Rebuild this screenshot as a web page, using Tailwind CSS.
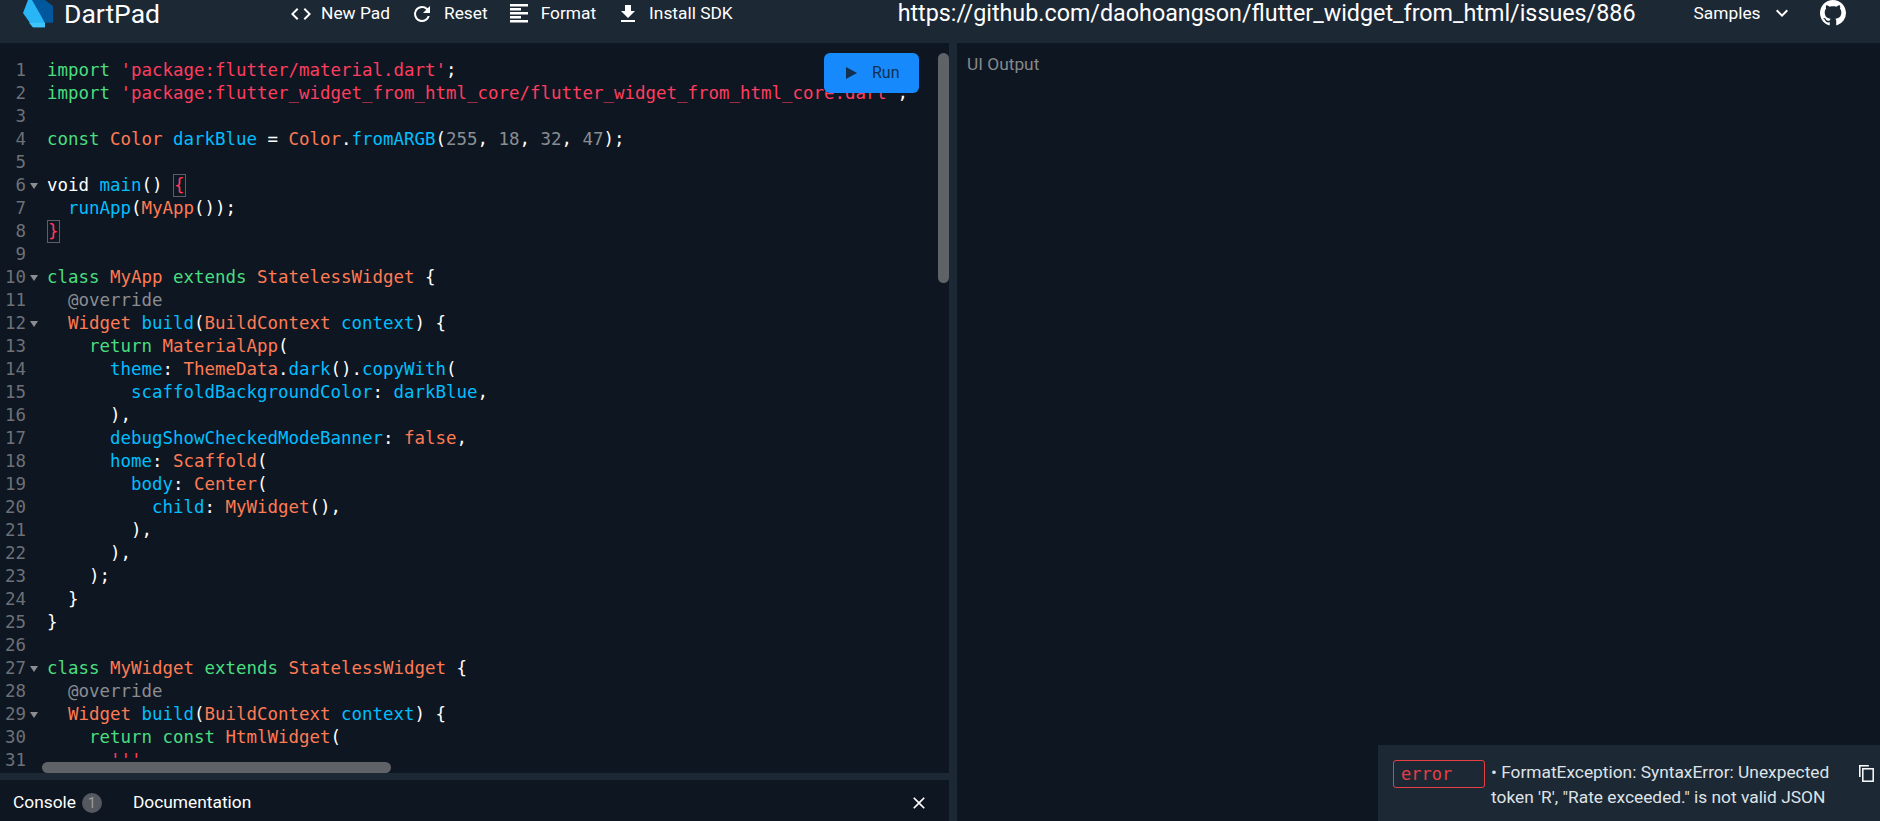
<!DOCTYPE html>
<html lang="en">
<head>
<meta charset="UTF-8">
<title>DartPad</title>
<script src="https://cdn.jsdelivr.net/npm/@tailwindcss/browser@4"></script>
</head>
<body class="h-[821px] w-[1880px] overflow-hidden bg-[#0e1621] font-['Roboto',sans-serif] text-[17.33px] text-white">
  <!-- header -->
  <header class="flex h-[43px] items-start overflow-hidden bg-[#1c2834]">
    <svg class="ml-[23px] h-[28px] w-[31px]" viewBox="0 0 31 28">
      <path d="M0 13 L5 0 L11 0 L22 22.7 L22 27.3 L10 27.3 Z" fill="#29b6f6"/>
      <path d="M6 22.7 L10 27.3 L22 27.3 L22 22.7 Z" fill="#40c4ff"/>
      <path d="M9 0 L22 0 L30 6 L30 22.7 L22 22.7 Z" fill="#01579b"/>
    </svg>
    <span class="ml-[10px] text-[26.5px] leading-[28px] text-white">DartPad</span>
    <nav class="ml-[129px] flex h-[27px] items-center">
      <svg class="h-[24px] w-[24px]" viewBox="0 0 24 24" fill="#fff"><path d="M9.4 16.6 4.8 12l4.6-4.6L8 6l-6 6 6 6 1.4-1.4zm5.2 0 4.6-4.6-4.6-4.6L16 6l6 6-6 6-1.4-1.4z"/></svg>
      <span class="ml-[8px]">New Pad</span>
      <svg class="ml-[20px] h-[24px] w-[24px]" viewBox="0 0 24 24" fill="#fff"><path d="M17.65 6.35A7.96 7.96 0 0 0 12 4a8 8 0 1 0 7.73 10h-2.08A6 6 0 1 1 12 6c1.66 0 3.14.69 4.22 1.78L13 11h7V4l-2.35 2.35z"/></svg>
      <span class="ml-[10px]">Reset</span>
      <svg class="ml-[22px] h-[19px] w-[18px]" viewBox="0 0 18 19" fill="#fff"><path d="M0 0h18v2.6H0zM0 4h11v2.6H0zM0 8h18v2.6H0zM0 12h11v2.6H0zM0 16h18v2.6H0z"/></svg>
      <span class="ml-[13px]">Format</span>
      <svg class="ml-[20px] h-[24px] w-[24px]" viewBox="0 0 24 24" fill="#fff"><path d="M19 9h-4V3H9v6H5l7 7 7-7zM5 18v2h14v-2H5z"/></svg>
      <span class="ml-[9px]">Install SDK</span>
    </nav>
    <span class="ml-[165px] h-[27px] text-[23.3px] leading-[27px] text-white">https://github.com/daohoangson/flutter_widget_from_html/issues/886</span>
    <span class="ml-[58px] flex h-[27px] items-center">Samples</span>
    <svg class="ml-[9px] mt-[1px] h-[24px] w-[24px]" viewBox="0 0 24 24" fill="#fff"><path d="M7.41 8.59 12 13.17l4.59-4.58L18 10l-6 6-6-6z"/></svg>
    <svg class="ml-[26px] h-[26px] w-[26px]" viewBox="0 0 16 16" fill="#fff"><path d="M8 0C3.58 0 0 3.58 0 8c0 3.54 2.29 6.53 5.47 7.59.4.07.55-.17.55-.38 0-.19-.01-.82-.01-1.49-2.01.37-2.53-.49-2.69-.94-.09-.23-.48-.94-.82-1.13-.28-.15-.68-.52-.01-.53.63-.01 1.08.58 1.23.82.72 1.21 1.87.87 2.33.66.07-.52.28-.87.51-1.07-1.78-.2-3.64-.89-3.64-3.95 0-.87.31-1.59.82-2.15-.08-.2-.36-1.02.08-2.12 0 0 .67-.21 2.2.82.64-.18 1.32-.27 2-.27s1.36.09 2 .27c1.53-1.04 2.2-.82 2.2-.82.44 1.1.16 1.92.08 2.12.51.56.82 1.27.82 2.15 0 3.07-1.87 3.75-3.65 3.95.29.25.54.73.54 1.48 0 1.07-.01 1.93-.01 2.2 0 .21.15.46.55.38A8.01 8.01 0 0 0 16 8c0-4.42-3.58-8-8-8z"/></svg>
  </header>

  <main class="flex h-[778px]">
    <!-- left column -->
    <section class="flex w-[949px] flex-col">
      <div class="relative h-[730px] overflow-hidden">
        <div class="flex pt-[16px] font-['DejaVu_Sans_Mono',monospace] text-[17.44px] leading-[23px] text-white">
          <div class="w-[47px] shrink-0 text-[#6d7177]">
            <div class="w-[26px] text-right">1</div><div class="w-[26px] text-right">2</div><div class="w-[26px] text-right">3</div><div class="w-[26px] text-right">4</div><div class="w-[26px] text-right">5</div>
            <div class="flex"><span class="w-[26px] text-right">6</span><span class="ml-[4px] mt-[9px] h-0 w-0 border-x-[4px] border-t-[6px] border-x-transparent border-t-[#8a8e93]"></span></div>
            <div class="w-[26px] text-right">7</div><div class="w-[26px] text-right">8</div><div class="w-[26px] text-right">9</div>
            <div class="flex"><span class="w-[26px] text-right">10</span><span class="ml-[4px] mt-[9px] h-0 w-0 border-x-[4px] border-t-[6px] border-x-transparent border-t-[#8a8e93]"></span></div>
            <div class="w-[26px] text-right">11</div>
            <div class="flex"><span class="w-[26px] text-right">12</span><span class="ml-[4px] mt-[9px] h-0 w-0 border-x-[4px] border-t-[6px] border-x-transparent border-t-[#8a8e93]"></span></div>
            <div class="w-[26px] text-right">13</div><div class="w-[26px] text-right">14</div><div class="w-[26px] text-right">15</div><div class="w-[26px] text-right">16</div><div class="w-[26px] text-right">17</div><div class="w-[26px] text-right">18</div><div class="w-[26px] text-right">19</div><div class="w-[26px] text-right">20</div><div class="w-[26px] text-right">21</div><div class="w-[26px] text-right">22</div><div class="w-[26px] text-right">23</div><div class="w-[26px] text-right">24</div><div class="w-[26px] text-right">25</div><div class="w-[26px] text-right">26</div>
            <div class="flex"><span class="w-[26px] text-right">27</span><span class="ml-[4px] mt-[9px] h-0 w-0 border-x-[4px] border-t-[6px] border-x-transparent border-t-[#8a8e93]"></span></div>
            <div class="w-[26px] text-right">28</div>
            <div class="flex"><span class="w-[26px] text-right">29</span><span class="ml-[4px] mt-[9px] h-0 w-0 border-x-[4px] border-t-[6px] border-x-transparent border-t-[#8a8e93]"></span></div>
            <div class="w-[26px] text-right">30</div><div class="w-[26px] text-right">31</div>
          </div>
          <div class="[&>div]:h-[23px] [&>div]:whitespace-pre">
            <div><span class="text-[#4ade80]">import</span> <span class="text-[#ff3d5e]">'package:flutter/material.dart'</span>;</div>
            <div><span class="text-[#4ade80]">import</span> <span class="text-[#ff3d5e]">'package:flutter_widget_from_html_core/flutter_widget_from_html_core.dart'</span>;</div>
            <div></div>
            <div><span class="text-[#4ade80]">const</span> <span class="text-[#ff7b54]">Color</span> <span class="text-[#00bfff]">darkBlue</span> = <span class="text-[#ff7b54]">Color</span>.<span class="text-[#00bfff]">fromARGB</span>(<span class="text-[#8a8e93]">255</span>, <span class="text-[#8a8e93]">18</span>, <span class="text-[#8a8e93]">32</span>, <span class="text-[#8a8e93]">47</span>);</div>
            <div></div>
            <div>void <span class="text-[#00bfff]">main</span>() <span class="inline-block h-[23px] border border-[#5c6066] leading-[21px] text-[#ff3d5e]">{</span></div>
            <div>  <span class="text-[#00bfff]">runApp</span>(<span class="text-[#ff7b54]">MyApp</span>());</div>
            <div><span class="inline-block h-[23px] border border-[#5c6066] leading-[21px] text-[#ff3d5e]">}</span></div>
            <div></div>
            <div><span class="text-[#4ade80]">class</span> <span class="text-[#ff7b54]">MyApp</span> <span class="text-[#4ade80]">extends</span> <span class="text-[#ff7b54]">StatelessWidget</span> {</div>
            <div>  <span class="text-[#8a8e93]">@override</span></div>
            <div>  <span class="text-[#ff7b54]">Widget</span> <span class="text-[#00bfff]">build</span>(<span class="text-[#ff7b54]">BuildContext</span> <span class="text-[#00bfff]">context</span>) {</div>
            <div>    <span class="text-[#4ade80]">return</span> <span class="text-[#ff7b54]">MaterialApp</span>(</div>
            <div>      <span class="text-[#00bfff]">theme</span>: <span class="text-[#ff7b54]">ThemeData</span>.<span class="text-[#00bfff]">dark</span>().<span class="text-[#00bfff]">copyWith</span>(</div>
            <div>        <span class="text-[#00bfff]">scaffoldBackgroundColor</span>: <span class="text-[#00bfff]">darkBlue</span>,</div>
            <div>      ),</div>
            <div>      <span class="text-[#00bfff]">debugShowCheckedModeBanner</span>: <span class="text-[#ff7b54]">false</span>,</div>
            <div>      <span class="text-[#00bfff]">home</span>: <span class="text-[#ff7b54]">Scaffold</span>(</div>
            <div>        <span class="text-[#00bfff]">body</span>: <span class="text-[#ff7b54]">Center</span>(</div>
            <div>          <span class="text-[#00bfff]">child</span>: <span class="text-[#ff7b54]">MyWidget</span>(),</div>
            <div>        ),</div>
            <div>      ),</div>
            <div>    );</div>
            <div>  }</div>
            <div>}</div>
            <div></div>
            <div><span class="text-[#4ade80]">class</span> <span class="text-[#ff7b54]">MyWidget</span> <span class="text-[#4ade80]">extends</span> <span class="text-[#ff7b54]">StatelessWidget</span> {</div>
            <div>  <span class="text-[#8a8e93]">@override</span></div>
            <div>  <span class="text-[#ff7b54]">Widget</span> <span class="text-[#00bfff]">build</span>(<span class="text-[#ff7b54]">BuildContext</span> <span class="text-[#00bfff]">context</span>) {</div>
            <div>    <span class="text-[#4ade80]">return</span> <span class="text-[#4ade80]">const</span> <span class="text-[#ff7b54]">HtmlWidget</span>(</div>
            <div>      <span class="text-[#ff3d5e]">'''</span></div>
          </div>
        </div>
        <!-- run button and scrollbars sit over the code -->
        <button class="absolute left-[824px] top-[10px] flex h-[40px] w-[95px] items-center rounded-[6px] bg-[#168afd] pl-[22px] text-[16px] text-[#12304f]">
          <span class="h-0 w-0 border-y-[6px] border-l-[11px] border-y-transparent border-l-[#12304f]"></span>
          <span class="ml-[15px]">Run</span>
        </button>
        <div class="absolute left-[938px] top-[10px] h-[230px] w-[11px] rounded-full bg-[#5f6368]"></div>
        <div class="absolute left-[42px] top-[719px] h-[11px] w-[349px] rounded-full bg-[#5f6368]"></div>
      </div>
      <div class="h-[7px] bg-[#1c2834]"></div>
      <div class="flex h-[41px] items-center pl-[13px] pr-[20px] pt-[5px]">
        <span class="text-white">Console</span>
        <span class="ml-[6px] flex h-[20px] w-[20px] items-center justify-center rounded-full bg-[#55595f] text-[14px] leading-[20px] text-[#9a9ea3]">1</span>
        <span class="ml-[31px] text-white">Documentation</span>
        <svg class="ml-auto h-[20px] w-[20px]" viewBox="0 0 24 24" fill="#fff"><path d="M19 6.41 17.59 5 12 10.59 6.41 5 5 6.41 10.59 12 5 17.59 6.41 19 12 13.41 17.59 19 19 17.59 13.41 12z"/></svg>
      </div>
    </section>
    <div class="w-[8px] bg-[#1c2834]"></div>
    <!-- output -->
    <section class="relative flex-1 pl-[10px] pt-[11px] leading-[20px] text-[#85888c]">
      UI Output
      <div class="absolute bottom-0 right-0 flex h-[76px] w-[502px] bg-[#1c2834] pl-[15px] pt-[15px]">
        <span class="flex h-[28px] w-[92px] items-center rounded-[3px] border border-[#e53f45] pl-[7px] font-['DejaVu_Sans_Mono',monospace] text-[17px] text-[#e53f45]">error</span>
        <p class="ml-[6px] w-[367px] leading-[25px] text-[#dfe3e8]">• FormatException: SyntaxError: Unexpected token 'R', "Rate exceeded." is not valid JSON</p>
        <svg class="ml-[1px] mt-[5px] h-[17px] w-[15px]" viewBox="0 0 15 17" fill="none" stroke="#fff" stroke-width="1.5"><path d="M.8 12V.8h9"/><rect x="3.8" y="3.8" width="10.4" height="12.4"/></svg>
      </div>
    </section>
  </main>
</body>
</html>
